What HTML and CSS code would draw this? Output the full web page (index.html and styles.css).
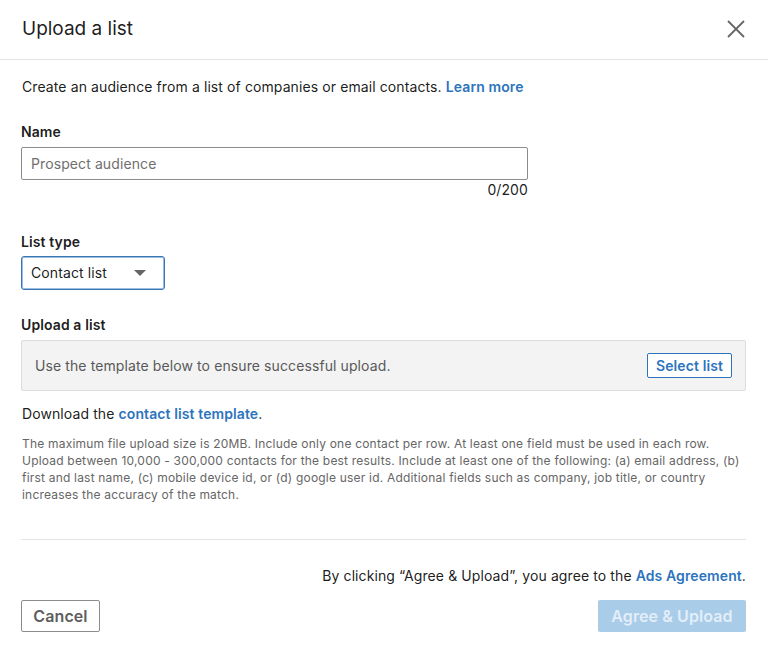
FILE: index.html
```html
<!DOCTYPE html>
<html lang="en">
<head>
<meta charset="utf-8">
<title>Upload a list</title>
<link rel="stylesheet" href="styles.css">
</head>
<body>
<div class="modal">
  <header class="modal-header">
    <h1 class="modal-title">Upload a list</h1>
    <button class="close-btn" aria-label="Close">
      <svg width="18" height="18" viewBox="0 0 18 18"><path d="M1 1L17 17M17 1L1 17" stroke="#666" stroke-width="1.8" fill="none"/></svg>
    </button>
  </header>
  <div class="modal-body">
    <p class="intro">Create an audience from a list of companies or email contacts. <a class="link" href="#">Learn more</a></p>

    <label class="field-label label-name">Name</label>
    <div class="input-wrap">
      <input class="text-input" type="text" placeholder="Prospect audience">
      <div class="counter">0/200</div>
    </div>

    <label class="field-label label-type">List type</label>
    <div class="select">
      <span>Contact list</span>
      <span class="caret"></span>
    </div>

    <label class="field-label label-upload">Upload a list</label>
    <div class="upload-box">
      <span class="upload-hint">Use the template below to ensure successful upload.</span>
      <button class="select-btn">Select list</button>
    </div>

    <p class="download">Download the <a class="link" href="#">contact list template</a>.</p>

    <p class="fine">The maximum file upload size is 20MB. Include only one contact per row. At least one field must be used in each row. Upload between 10,000 - 300,000 contacts for the best results. Include at least one of the following: (a) email address, (b) first and last name, (c) mobile device id, or (d) google user id. Additional fields such as company, job title, or country increases the accuracy of the match.</p>

    <div class="footer">
      <p class="agree-text">By clicking “Agree &amp; Upload”, you agree to the <a class="link" href="#">Ads Agreement</a>.</p>
      <div class="actions">
        <button class="btn btn-cancel">Cancel</button>
        <button class="btn btn-primary" disabled>Agree &amp; Upload</button>
      </div>
    </div>
  </div>
</div>
</body>
</html>
```

FILE: styles.css
```css
* { box-sizing: border-box; }
html, body {
  margin: 0;
  padding: 0;
  background: #fff;
}
body {
  font-family: Inter, "Liberation Sans", Arial, sans-serif;
  color: rgba(0,0,0,0.9);
  font-size: 14px;
  line-height: 20px;
  letter-spacing: 0.1px;
}
.modal {
  width: 768px;
  height: 648px;
  background: #fff;
}
.modal-header {
  height: 60px;
  border-bottom: 1px solid #e3e3e3;
  display: flex;
  align-items: center;
  justify-content: space-between;
  padding: 0 20px 2px 22px;
}
.modal-title {
  margin: 0;
  font-size: 19px;
  font-weight: 400;
  line-height: 28px;
  letter-spacing: 0;
  color: rgba(0,0,0,0.9);
}
.close-btn {
  border: 0;
  background: none;
  padding: 0;
  width: 24px;
  height: 24px;
  display: flex;
  align-items: center;
  justify-content: center;
}
.modal-body {
  padding: 17px 22px 0 21px;
}
.intro {
  margin: 0;
  padding-left: 1px;
}
.link {
  color: #2d74bd;
  font-weight: 600;
  text-decoration: none;
}
.field-label {
  display: block;
  font-weight: 600;
  line-height: 20px;
}
.label-name { margin-top: 25px; }
.label-type { margin-top: 32px; }
.label-upload { margin-top: 25px; }
.input-wrap {
  width: 507px;
  margin-top: 5px;
}
.text-input {
  display: block;
  width: 507px;
  height: 33px;
  border: 1px solid #8c8c8c;
  border-radius: 2px;
  padding: 0 9px;
  font-family: inherit;
  font-size: 14px;
  letter-spacing: 0.1px;
  color: rgba(0,0,0,0.9);
  outline: none;
}
.text-input::placeholder { color: #6f6f6f; }
.counter {
  text-align: right;
  line-height: 20px;
  color: rgba(0,0,0,0.9);
}
.select {
  margin-top: 4px;
  width: 144px;
  height: 34px;
  border: 1px solid #3a74b6;
  box-shadow: 0 0 0 1px #9bbde0 inset;
  border-radius: 3px;
  display: flex;
  align-items: center;
  padding: 0 18px 0 9px;
  justify-content: space-between;
  color: rgba(0,0,0,0.9);
}
.caret {
  width: 0;
  height: 0;
  border-left: 6px solid transparent;
  border-right: 6px solid transparent;
  border-top: 6px solid #666;
}
.upload-box {
  margin-top: 5px;
  height: 51px;
  background: #f3f3f4;
  border: 1px solid #dcdcdc;
  border-radius: 2px;
  display: flex;
  align-items: center;
  justify-content: space-between;
  padding: 0 13px 0 13px;
}
.upload-hint { color: #595959; }
.select-btn {
  font-family: inherit;
  font-size: 14px;
  font-weight: 600;
  letter-spacing: 0.1px;
  color: #2d74bd;
  background: #fff;
  border: 1px solid #2d74bd;
  border-radius: 2px;
  height: 25px;
  padding: 0 8px;
  line-height: 20px;
}
.download {
  margin: 13px 0 0;
  padding-left: 1px;
}
.fine {
  margin: 11px 0 0;
  padding-left: 1px;
  font-size: 12px;
  line-height: 17px;
  letter-spacing: 0.2px;
  color: #666;
}
.footer {
  margin-top: 36px;
  border-top: 1px solid #e3e3e3;
  width: 725px;
}
.agree-text {
  margin: 26px 0 0;
  text-align: right;
}
.actions {
  margin-top: 14px;
  display: flex;
  justify-content: space-between;
}
.btn {
  font-family: inherit;
  font-size: 16px;
  font-weight: 600;
  letter-spacing: 0.1px;
  height: 32px;
  border-radius: 2px;
  line-height: 20px;
}
.btn-cancel {
  width: 79px;
  background: #fff;
  color: #5e5e5e;
  border: 1px solid #8c8c8c;
}
.btn-primary {
  width: 148px;
  background: #a9cce9;
  color: #e3eef8;
  border: 0;
}
```
